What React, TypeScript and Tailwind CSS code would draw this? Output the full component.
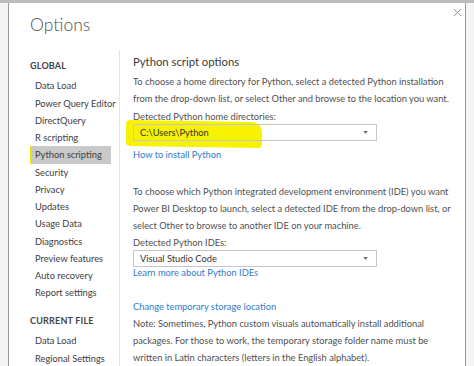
import React from 'react';

const globalItems = [
  'Data Load',
  'Power Query Editor',
  'DirectQuery',
  'R scripting',
  'Python scripting',
  'Security',
  'Privacy',
  'Updates',
  'Usage Data',
  'Diagnostics',
  'Preview features',
  'Auto recovery',
  'Report settings',
];

const fileItems = ['Data Load', 'Regional Settings'];

const NavItem = ({ label, active }: { label: string; active?: boolean }) => (
  <div
    className={`h-[17.25px] leading-[17.25px] text-[9.3px] text-[#3d3d3d] whitespace-nowrap ${
      active ? 'bg-[#c9c9c9] border-l-[2px] border-[#ece400] pl-[3px]' : 'pl-[5px]'
    }`}
  >
    {label}
  </div>
);

const Dropdown = ({ value }: { value: string }) => (
  <div className="w-[244px] h-[17px] border border-[#c6c6c6] flex items-center pl-[6px] pr-[8px]">
    <span className="flex-1 text-[9.3px] text-[#333] leading-none">{value}</span>
    <svg width="5" height="3" viewBox="0 0 6 4" className="shrink-0">
      <path d="M0 0 L6 0 L3 3.5 Z" fill="#666" />
    </svg>
  </div>
);

const Lines = ({ lines, className = '' }: { lines: string[]; className?: string }) => (
  <div className={className}>
    {lines.map((l) => (
      <div key={l} className="h-[17px] leading-[17px] whitespace-nowrap">
        {l}
      </div>
    ))}
  </div>
);

export default function App() {
  return (
    <div
      className="w-[474px] h-[366px] overflow-hidden bg-[#f4f4f4] border-t-[3px] border-[#bcbcbc] pl-[8px]"
      style={{ fontFamily: 'Lato, "Open Sans", sans-serif' }}
    >
      <div className="relative w-[458px] h-[370px] bg-white border-l border-r-[1.5px] border-[#9a9a9a]">
        {/* close */}
        <svg width="9" height="9" viewBox="0 0 10 10" className="absolute right-[3px] top-[5px]">
          <path d="M1 1 L9 9 M9 1 L1 9" stroke="#8a8a8a" strokeWidth="1" />
        </svg>

        <div className="h-[47px] pl-[21px] pt-[9px] text-[17.5px] font-light text-[#505050] leading-[26px]">
          Options
        </div>

        <div className="flex">
          {/* left nav */}
          <div className="w-[111px] shrink-0 border-r border-[#e4e4e4] pl-[21px] pr-[8px] pt-[9px] pb-[40px]">
            <div className="h-[14px] leading-[14px] text-[9px] font-bold text-[#444] tracking-[0.2px]">GLOBAL</div>
            <div className="mt-[4.4px]">
              {globalItems.map((it) => (
                <NavItem key={it} label={it} active={it === 'Python scripting'} />
              ))}
            </div>
            <div className="mt-[12.4px] h-[14px] leading-[14px] text-[9px] font-bold text-[#444] tracking-[0.2px]">
              CURRENT FILE
            </div>
            <div className="mt-[4.4px]">
              {fileItems.map((it) => (
                <NavItem key={it} label={it} />
              ))}
            </div>
          </div>

          {/* content */}
          <div className="flex-1 pl-[13px] pt-[3px] text-[9.3px] text-[#4f4f4f]">
            <div className="h-[18px] text-[11.3px] text-[#3a3a3a] leading-[18px] whitespace-nowrap">
              Python script options
            </div>
            <Lines
              className="mt-[1.5px]"
              lines={[
                'To choose a home directory for Python, select a detected Python installation',
                'from the drop-down list, or select Other and browse to the location you want.',
              ]}
            />
            <div className="mt-[4.5px] h-[12px] leading-[12px]">Detected Python home directories:</div>
            <div className="relative mt-[1px]">
              <div className="absolute left-[-7px] top-[-3px] w-[136px] h-[26px] bg-[#f6f200] rounded-[4px] rounded-tr-[10px] rotate-[1deg]" />
              <div className="relative">
                <Dropdown value="C:\Users\Python" />
              </div>
            </div>
            <div className="mt-[7px] h-[14px] leading-[14px] text-[#2f7bcc]">How to install Python</div>

            <Lines
              className="mt-[21px]"
              lines={[
                'To choose which Python integrated development environment (IDE) you want',
                'Power BI Desktop to launch, select a detected IDE from the drop-down list, or',
                'select Other to browse to another IDE on your machine.',
              ]}
            />
            <div className="mt-[3px] h-[12px] leading-[12px]">Detected Python IDEs:</div>
            <div className="mt-[1px]">
              <Dropdown value="Visual Studio Code" />
            </div>
            <div className="h-[12px] leading-[12px] text-[#2f7bcc]">Learn more about Python IDEs</div>

            <div className="mt-[19px] h-[17px] leading-[17px] text-[#2f7bcc]">Change temporary storage location</div>
            <Lines
              lines={[
                'Note: Sometimes, Python custom visuals automatically install additional',
                'packages. For those to work, the temporary storage folder name must be',
                'written in Latin characters (letters in the English alphabet).',
              ]}
            />
          </div>
        </div>
      </div>
    </div>
  );
}
